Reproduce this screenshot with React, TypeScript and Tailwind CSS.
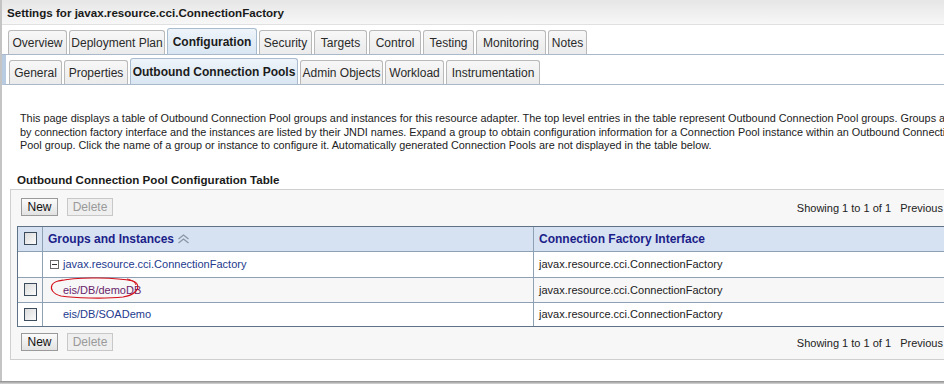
import React from 'react'

const font = "font-['Tahoma','Liberation_Sans',sans-serif]"

const topTabs = [
  { name: 'Overview', w: 'w-[59px]' },
  { name: 'Deployment Plan', w: 'w-[96px]' },
  { name: 'Configuration', w: 'w-[90px]', active: true },
  { name: 'Security', w: 'w-[53px]' },
  { name: 'Targets', w: 'w-[53px]' },
  { name: 'Control', w: 'w-[52px]' },
  { name: 'Testing', w: 'w-[51px]' },
  { name: 'Monitoring', w: 'w-[70px]' },
  { name: 'Notes', w: 'w-[39px]' },
]

const subTabs = [
  { name: 'General', w: 'w-[53px]' },
  { name: 'Properties', w: 'w-[64px]' },
  { name: 'Outbound Connection Pools', w: 'w-[168px]', active: true },
  { name: 'Admin Objects', w: 'w-[83px]' },
  { name: 'Workload', w: 'w-[59px]' },
  { name: 'Instrumentation', w: 'w-[94px]' },
]

function Tab({ name, w, active }: { name: string; w: string; active?: boolean }) {
  return (
    <div
      className={`${w} shrink-0 flex items-center justify-center rounded-t-[3px] border border-b-0 text-[12px] ${
        active
          ? 'h-[26px] bg-gradient-to-b from-[#eef4fa] to-[#d9e6f2] border-[#a9bccf] font-bold text-[#1b1b1b]'
          : 'h-[24px] bg-gradient-to-b from-[#f7f7f7] to-[#ebebeb] border-[#b9b9b9] text-[#2a2a2a]'
      }`}
    >
      {name}
    </div>
  )
}

function Button({ label, disabled }: { label: string; disabled?: boolean }) {
  return (
    <div
      className={`h-[18px] flex items-center justify-center border text-[12px] ${
        disabled
          ? 'w-[46px] border-[#c8c8c8] bg-[#efefef] text-[#9a9a9a]'
          : 'w-[37px] border-[#9a9a9a] bg-gradient-to-b from-[#fbfbfb] to-[#e2e2e2] text-[#111]'
      }`}
    >
      {label}
    </div>
  )
}

function Checkbox() {
  return <div className="w-[13px] h-[13px] border border-[#3d4c5c] bg-gradient-to-br from-[#dcdcdc] to-[#fbfbfb]" />
}

function SortIcon() {
  return (
    <svg width="13" height="10" viewBox="0 0 13 10" className="ml-[3px]">
      <path d="M1.5 5 L6.5 1 L11.5 5" fill="none" stroke="#8a95a5" strokeWidth="1.3" />
      <path d="M1.5 9 L6.5 5 L11.5 9" fill="none" stroke="#8a95a5" strokeWidth="1.3" />
    </svg>
  )
}

function Ellipse() {
  return (
    <svg width="92" height="22" viewBox="0 0 92 22" className="absolute left-[-14px] top-[-5px] pointer-events-none">
      <path
        d="M10 4 C30 -1 70 1 84 4 C90 6 90 12 86 15 C84 17 80 19 74 20 C55 22 25 21 12 19 C4 17 1 12 3 8 C4 6 7 4 14 3"
        fill="none"
        stroke="#d4101a"
        strokeWidth="1.1"
      />
      <path d="M78 2 C83 3 86 5 87 8" fill="none" stroke="#d4101a" strokeWidth="1" />
    </svg>
  )
}

function Pager() {
  return (
    <div className="text-[11px] text-[#222] whitespace-nowrap mr-[1px]">
      Showing 1 to 1 of 1&nbsp;&nbsp; Previous
    </div>
  )
}

export default function App() {
  return (
    <div className={`w-[944px] h-[384px] overflow-hidden bg-white ${font}`}>
      <div className="h-[381px] border-l-2 border-[#c4c4c4] flex flex-col">
        {/* Title */}
        <div className="h-[25px] shrink-0 flex items-center pl-[5px] pt-[2px] bg-gradient-to-b from-[#e6e6e6] to-[#f7f7f7] border-b border-[#e0e0e0] text-[11.6px] font-bold text-[#1a1a1a] whitespace-nowrap">
          Settings for javax.resource.cci.ConnectionFactory
        </div>

        {/* Top tabs */}
        <div className="h-[30px] shrink-0 flex items-end gap-[2px] pl-[6px] border-b border-[#a9b9ca]">
          {topTabs.map((t) => (
            <Tab key={t.name} {...t} />
          ))}
        </div>

        {/* Sub tabs */}
        <div className="h-[30px] shrink-0 flex items-end gap-[2px] pl-[3px] border-l-[4px] border-[#b8cbe0] border-b border-b-[#a9b9ca]">
          {subTabs.map((t) => (
            <Tab key={t.name} {...t} />
          ))}
        </div>

        {/* Description */}
        <div className="pt-[27px] pl-[18px] text-[10.85px] leading-[13.5px] text-[#222] whitespace-nowrap">
          <div>
            This page displays a table of Outbound Connection Pool groups and instances for this resource adapter. The top level entries in the table represent Outbound Connection Pool groups. Groups are
          </div>
          <div>
            by connection factory interface and the instances are listed by their JNDI names. Expand a group to obtain configuration information for a Connection Pool instance within an Outbound Connection
          </div>
          <div>
            Pool group. Click the name of a group or instance to configure it. Automatically generated Connection Pools are not displayed in the table below.
          </div>
        </div>

        <div className="pt-[18px] pl-[15px] text-[11.6px] font-bold text-[#1a1a1a] whitespace-nowrap">
          Outbound Connection Pool Configuration Table
        </div>

        {/* Table box */}
        <div className="mt-[1px] ml-[8px] h-[171px] shrink-0 bg-[#f7f7f7] border border-r-0 border-[#cfcfcf] pl-[6px]">
          <div className="h-[36px] flex items-center justify-between pl-[4px]">
            <div className="flex gap-[9px] mt-[-2px]">
              <Button label="New" />
              <Button label="Delete" disabled />
            </div>
            <Pager />
          </div>

          <div className="border border-r-0 border-[#5f7388] text-[11px]">
            <div className="h-[25px] flex bg-[#d6e2f1] border-b border-[#8ea0b4]">
              <div className="w-[25px] shrink-0 flex items-center justify-center border-r border-[#8ea0b4]">
                <Checkbox />
              </div>
              <div className="w-[491px] shrink-0 flex items-center pl-[5px] border-r border-[#8ea0b4] font-bold text-[12px] text-[#1c1e8a]">
                Groups and Instances
                <SortIcon />
              </div>
              <div className="flex-1 flex items-center pl-[5px] font-bold text-[12px] text-[#1c1e8a] whitespace-nowrap">
                Connection Factory Interface
              </div>
            </div>

            <div className="h-[26px] flex bg-white border-b border-[#8ea0b4]">
              <div className="w-[25px] shrink-0 border-r border-[#8ea0b4]" />
              <div className="w-[491px] shrink-0 flex items-center pl-[7px] border-r border-[#8ea0b4] text-[#233a8e]">
                <div className="w-[9px] h-[9px] border border-[#6a6a6a] flex items-center justify-center mr-[4px]">
                  <div className="w-[5px] h-[1px] bg-[#333]" />
                </div>
                javax.resource.cci.ConnectionFactory
              </div>
              <div className="flex-1 flex items-center pl-[5px] text-[#222]">javax.resource.cci.ConnectionFactory</div>
            </div>

            <div className="h-[25px] flex bg-[#f7f7f7] border-b border-[#8ea0b4]">
              <div className="w-[25px] shrink-0 flex items-center justify-center border-r border-[#8ea0b4]">
                <Checkbox />
              </div>
              <div className="w-[491px] shrink-0 flex items-center pl-[20px] border-r border-[#8ea0b4] text-[#6a1f6a]">
                <span className="relative">
                  eis/DB/demoDB
                  <Ellipse />
                </span>
              </div>
              <div className="flex-1 flex items-center pl-[5px] text-[#222]">javax.resource.cci.ConnectionFactory</div>
            </div>

            <div className="h-[23px] flex bg-white">
              <div className="w-[25px] shrink-0 flex items-center justify-center border-r border-[#8ea0b4]">
                <Checkbox />
              </div>
              <div className="w-[491px] shrink-0 flex items-center pl-[20px] border-r border-[#8ea0b4] text-[#233a8e]">
                eis/DB/SOADemo
              </div>
              <div className="flex-1 flex items-center pl-[5px] text-[#222]">javax.resource.cci.ConnectionFactory</div>
            </div>
          </div>

          <div className="h-[33px] flex items-center justify-between pl-[4px]">
            <div className="flex gap-[9px] mt-[-2px]">
              <Button label="New" />
              <Button label="Delete" disabled />
            </div>
            <Pager />
          </div>
        </div>
      </div>
      <div className="h-[3px] bg-gradient-to-b from-[#8c8c8c] to-[#d8d8d8]" />
    </div>
  )
}
